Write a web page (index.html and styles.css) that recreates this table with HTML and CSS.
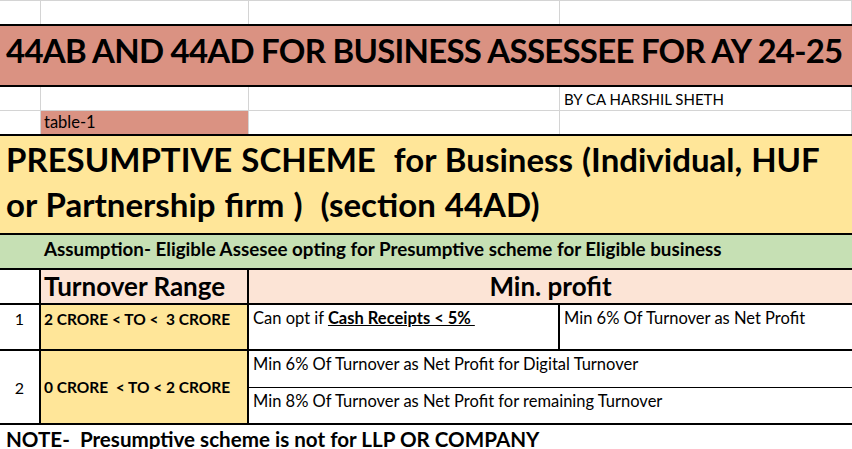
FILE: index.html
```html
<!DOCTYPE html>
<html lang="en">
<head>
<meta charset="utf-8">
<title>44AB and 44AD for Business Assessee</title>
<link rel="stylesheet" href="styles.css">
</head>
<body>
<div class="sheet">
  <div class="row r-blank">
    <div class="cell"></div><div class="cell"></div><div class="cell"></div><div class="cell"></div>
  </div>
  <div class="row r-title">
    <div class="title">44AB AND 44AD FOR BUSINESS ASSESSEE FOR AY 24-25</div>
  </div>
  <div class="row r-grid">
    <div class="cell"></div><div class="cell"></div><div class="cell"></div><div class="cell byline">BY CA HARSHIL SHETH</div>
  </div>
  <div class="row r-grid r-last">
    <div class="cell"></div><div class="cell tag">table-1</div><div class="cell"></div><div class="cell"></div>
  </div>
  <div class="row r-scheme">
    <div class="scheme">PRESUMPTIVE SCHEME  for Business (Individual, HUF<br>or Partnership firm )  (section 44AD)</div>
  </div>
  <div class="row r-assume">
    <div class="assume">Assumption- Eligible Assesee opting for Presumptive scheme for Eligible business</div>
  </div>
  <div class="row r-head">
    <div class="cell idx"></div>
    <div class="cell range-head">Turnover Range</div>
    <div class="cell profit-head">Min. profit</div>
  </div>
  <div class="row r-one">
    <div class="cell idx">1</div>
    <div class="cell range">2 CRORE &lt; TO &lt;  3 CRORE</div>
    <div class="cell desc">Can opt if <b class="ul">Cash Receipts &lt; 5%&nbsp;</b></div>
    <div class="cell desc">Min 6% Of Turnover as Net Profit</div>
  </div>
  <div class="row r-two">
    <div class="cell idx mid">2</div>
    <div class="cell range mid">0 CRORE  &lt; TO &lt; 2 CRORE</div>
    <div class="cell split">
      <div class="sub">Min 6% Of Turnover as Net Profit for Digital Turnover</div>
      <div class="sub">Min 8% Of Turnover as Net Profit for remaining Turnover</div>
    </div>
  </div>
  <div class="row r-note">
    <div class="note">NOTE-  Presumptive scheme is not for LLP OR COMPANY</div>
  </div>
</div>
</body>
</html>
```

FILE: styles.css
```css
* { box-sizing: border-box; }
html, body { margin: 0; padding: 0; background: #ffffff; }
body { font-family: Lato, "Open Sans", sans-serif; color: #000; width: 852px; overflow: hidden; }

.sheet { width: 852px; border-top: 1px solid #d4d4d4; }

.row { display: grid; grid-template-columns: 41px 208px 311px 1fr; }

.cell { border-right: 1px solid #d4d4d4; white-space: pre; }

.r-blank { height: 23px; }

.r-title {
  display: block;
  height: 63px;
  background: #da9282;
  border-top: 2px solid #000;
  border-bottom: 2px solid #000;
}
.title {
  font-weight: 700;
  font-size: 33px;
  line-height: 49px;
  padding-left: 6px;
  white-space: nowrap;
  letter-spacing: -0.75px;
}

.r-grid { height: 24px; border-bottom: 1px solid #d4d4d4; }
.r-grid.r-last { height: 23px; border-bottom: none; }
.byline { font-size: 15px; line-height: 24px; padding-left: 4px; }
.tag { background: #da9282; font-size: 16.5px; line-height: 23px; padding-left: 3px; }

.r-scheme {
  display: block;
  height: 101px;
  background: #ffe699;
  border-top: 2px solid #000;
  border-bottom: 2px solid #000;
}
.scheme {
  font-weight: 700;
  font-size: 33px;
  line-height: 45px;
  padding: 1px 0 0 6px;
  white-space: pre;
  word-spacing: 1px;
}

.r-assume {
  display: block;
  height: 35px;
  background: #c6e0b4;
  border-bottom: 2px solid #000;
}
.assume {
  font-weight: 700;
  font-size: 18.8px;
  line-height: 28px;
  padding-left: 44px;
  white-space: nowrap;
}

.r-head { height: 35px; border-bottom: 2px solid #000; grid-template-columns: 41px 208px 1fr; }
.r-head .cell, .r-one .cell, .r-two .cell { border-right: 2px solid #000; }
.r-head .cell:last-child, .r-two .cell:last-child { border-right: none; }
.r-one .cell:last-child { border-right: none; }

.range-head {
  background: #fce4d6;
  font-weight: 700;
  font-size: 26px;
  line-height: 33px;
  padding-left: 3px;
}
.profit-head {
  background: #fce4d6;
  font-weight: 700;
  font-size: 26px;
  line-height: 33px;
  text-align: center;
}

.r-one { height: 46px; border-bottom: 2px solid #000; }
.idx { text-align: center; font-size: 16px; line-height: 27px; }
.range {
  background: #ffe699;
  font-weight: 700;
  font-size: 15.5px;
  line-height: 28px;
  padding-left: 3px;
}
.desc { font-size: 16.5px; line-height: 27px; padding-left: 4px; }
.ul { text-decoration: underline; }

.r-two { height: 74px; border-bottom: 2px solid #000; grid-template-columns: 41px 208px 1fr; }
.mid { display: flex; align-items: center; }
.idx.mid { justify-content: center; }
.split { display: flex; flex-direction: column; }
.sub { flex: 1; font-size: 16.5px; line-height: 26px; padding-left: 4px; }
.sub + .sub { border-top: 1px solid #000; }

.r-note { display: block; height: 30px; }
.note {
  font-weight: 700;
  font-size: 20.6px;
  line-height: 28px;
  padding-left: 6px;
  white-space: pre;
}
```
